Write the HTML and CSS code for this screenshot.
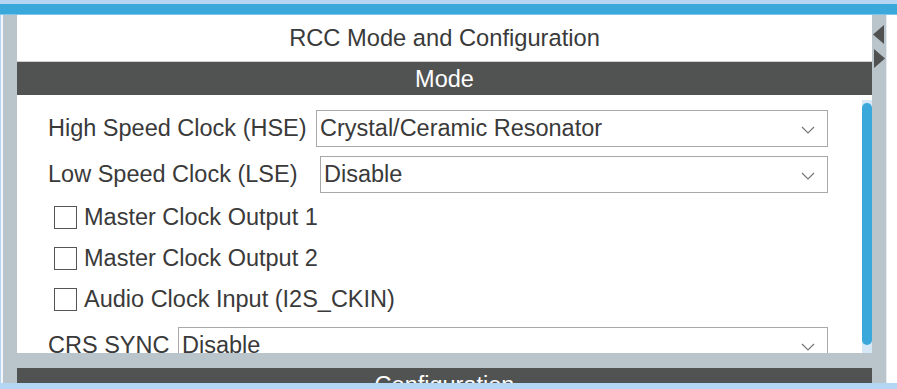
FILE: index.html
```html
<!DOCTYPE html>
<html>
<head>
<meta charset="utf-8">
<link rel="stylesheet" href="styles.css">
</head>
<body>
<div class="window">
  <div class="topbar"></div>
  <div class="main">
    <div class="edge-left"></div>
    <div class="gutter"></div>
    <div class="panel">
      <div class="title">RCC Mode and Configuration</div>
      <div class="section-head">Mode</div>
      <div class="mode-area">
        <div class="mode-content">
          <div class="field-row row-hse">
            <span class="label">High Speed Clock (HSE)</span>
            <div class="select sel-hse"><span class="value">Crystal/Ceramic Resonator</span><svg class="chev" width="14" height="8" viewBox="0 0 14 8"><path d="M1 1 L7 7 L13 1" fill="none" stroke="#777" stroke-width="1.2"/></svg></div>
          </div>
          <div class="field-row row-lse">
            <span class="label">Low Speed Clock (LSE)</span>
            <div class="select sel-lse"><span class="value">Disable</span><svg class="chev" width="14" height="8" viewBox="0 0 14 8"><path d="M1 1 L7 7 L13 1" fill="none" stroke="#777" stroke-width="1.2"/></svg></div>
          </div>
          <div class="check-row first"><span class="box"></span><span class="label">Master Clock Output 1</span></div>
          <div class="check-row"><span class="box"></span><span class="label">Master Clock Output 2</span></div>
          <div class="check-row"><span class="box"></span><span class="label">Audio Clock Input (I2S_CKIN)</span></div>
          <div class="field-row row-crs">
            <span class="label">CRS SYNC</span>
            <div class="select sel-crs"><span class="value">Disable</span><svg class="chev" width="14" height="8" viewBox="0 0 14 8"><path d="M1 1 L7 7 L13 1" fill="none" stroke="#777" stroke-width="1.2"/></svg></div>
          </div>
        </div>
        <div class="scrolltrack"><div class="thumb"></div></div>
      </div>
      <div class="band"></div>
      <div class="section-head config">Configuration</div>
    </div>
    <div class="rightcol">
      <svg class="arrow" width="12" height="19" viewBox="0 0 12 19"><path d="M11 0 L0 9.5 L11 19 Z" fill="#505252"/></svg>
      <svg class="arrow" width="12" height="19" viewBox="0 0 12 19"><path d="M1 0 L12 9.5 L1 19 Z" fill="#505252"/></svg>
    </div>
    <div class="edge-right"></div>
  </div>
  <div class="bottombar"></div>
</div>
</body>
</html>
```

FILE: styles.css
```css
html, body {
  margin: 0;
  padding: 0;
  background: #ffffff;
}
.window {
  width: 897px;
  height: 389px;
  display: flex;
  flex-direction: column;
  overflow: hidden;
  font-family: "Liberation Sans", Arial, sans-serif;
  color: #3a3a3a;
  background: #b4d5f4;
}
.topbar {
  height: 10px;
  margin-top: 4px;
  background: #3aa8db;
  border-bottom: 1px solid #7cc4e8;
  flex: none;
}
.main {
  flex: 1;
  display: flex;
  min-height: 0;
}
.edge-left {
  width: 1px;
  background: #b4d5f4;
}
.gutter {
  width: 16px;
  background: #b9c4cb;
  border-left: 2px solid #f2f6fa;
  box-sizing: border-box;
}
.panel {
  width: 855px;
  display: flex;
  flex-direction: column;
  background: #ffffff;
  min-height: 0;
}
.title {
  height: 46px;
  line-height: 46px;
  text-align: center;
  font-size: 23.7px;
  flex: none;
}
.section-head {
  height: 34px;
  line-height: 34px;
  background: #515352;
  color: #ffffff;
  text-align: center;
  font-size: 23.5px;
  flex: none;
  border-top: 1px solid #d0d0d0;
  box-sizing: border-box;
}
.mode-area {
  height: 258px;
  display: flex;
  flex: none;
  overflow: hidden;
}
.mode-content {
  flex: 1;
  padding: 15px 0 0 31px;
  display: flex;
  flex-direction: column;
}
.field-row {
  display: flex;
  align-items: center;
  height: 37px;
  flex: none;
}
.row-lse {
  margin-top: 9px;
}
.row-crs {
  margin-top: 7px;
}
.label {
  font-size: 23.5px;
  white-space: nowrap;
}
.select {
  height: 37px;
  box-sizing: border-box;
  border: 1.5px solid #a8a8a8;
  display: flex;
  align-items: center;
  justify-content: space-between;
  padding: 0 12px 0 3px;
  background: #fff;
  margin-left: auto;
  margin-right: 34px;
  flex: none;
}
.sel-hse { width: 512px; }
.sel-lse { width: 508px; }
.sel-crs { width: 650px; }
.value {
  font-size: 23.5px;
  color: #3a3a3a;
}
.chev {
  margin-top: 2px;
}
.check-row {
  display: flex;
  align-items: center;
  height: 41px;
  margin-left: 6px;
  flex: none;
}
.check-row.first {
  margin-top: 4px;
}
.box {
  width: 23px;
  height: 23px;
  box-sizing: border-box;
  border: 1.5px solid #555;
  margin-right: 7px;
  flex: none;
  background: #fff;
}
.scrolltrack {
  width: 10px;
  margin-top: 5px;
  background: #d6e8f6;
  display: flex;
  flex-direction: column;
}
.thumb {
  height: 242px;
  margin-top: 3px;
  background: #3aa8db;
  border-radius: 5px;
}
.band {
  height: 15px;
  background: #b9c4cb;
  flex: none;
}
.config {
  height: 20px;
  line-height: 34px;
  border-top: none;
  overflow: hidden;
}
.rightcol {
  width: 14px;
  background: #b9c4cb;
  display: flex;
  flex-direction: column;
  align-items: center;
  padding-top: 10px;
  gap: 5px;
}
.edge-right {
  flex: 1;
  background: #ffffff;
  border-left: 1px solid #e4eaef;
}
.bottombar {
  height: 6px;
  background: #b4d5f4;
  flex: none;
}
```
